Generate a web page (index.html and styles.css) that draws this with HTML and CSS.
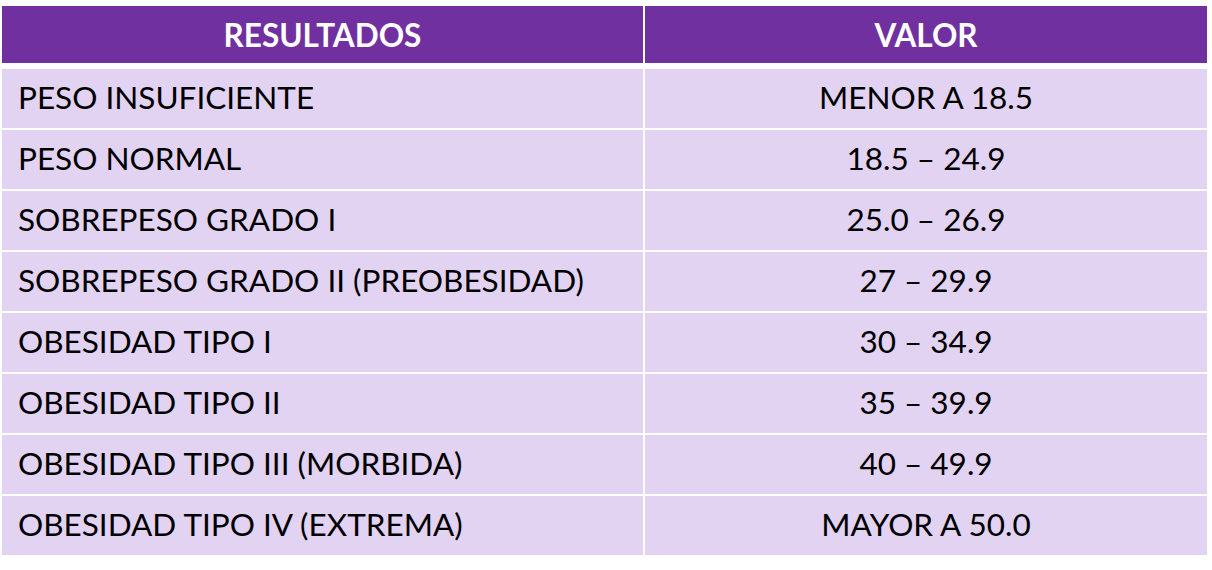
FILE: index.html
```html
<!DOCTYPE html>
<html lang="es">
<head>
<meta charset="utf-8">
<title>IMC</title>
<link rel="stylesheet" href="styles.css">
</head>
<body>
<div class="table">
  <div class="cell head">RESULTADOS</div>
  <div class="cell head">VALOR</div>

  <div class="cell name">PESO INSUFICIENTE</div>
  <div class="cell val">MENOR A 18.5</div>

  <div class="cell name">PESO NORMAL</div>
  <div class="cell val">18.5 – 24.9</div>

  <div class="cell name">SOBREPESO GRADO I</div>
  <div class="cell val">25.0 – 26.9</div>

  <div class="cell name">SOBREPESO GRADO II (PREOBESIDAD)</div>
  <div class="cell val">27 – 29.9</div>

  <div class="cell name">OBESIDAD TIPO I</div>
  <div class="cell val">30 – 34.9</div>

  <div class="cell name">OBESIDAD TIPO II</div>
  <div class="cell val">35 – 39.9</div>

  <div class="cell name">OBESIDAD TIPO III (MORBIDA)</div>
  <div class="cell val">40 – 49.9</div>

  <div class="cell name">OBESIDAD TIPO IV (EXTREMA)</div>
  <div class="cell val">MAYOR A 50.0</div>
</div>
</body>
</html>
```

FILE: styles.css
```css
html, body {
  margin: 0;
  padding: 0;
  background: #ffffff;
}

body {
  padding: 6px 5px 0 2px;
  font-family: Lato, "Open Sans", "Liberation Sans", sans-serif;
}

.table {
  display: grid;
  grid-template-columns: 641px 562px;
  grid-template-rows: 61px repeat(8, 59px);
  column-gap: 2px;
  row-gap: 2px;
  width: 1205px;
}

.cell {
  display: flex;
  align-items: center;
  font-size: 31.5px;
  color: #000000;
  background: #e2d3f2;
  white-space: nowrap;
  padding-bottom: 3px;
  box-sizing: border-box;
}

.head {
  background: #7030a0;
  color: #ffffff;
  font-weight: 700;
  justify-content: center;
  align-self: start;
  height: 57px;
  padding-bottom: 0;
}

.name {
  padding-left: 16px;
}

.val {
  justify-content: center;
}
```
